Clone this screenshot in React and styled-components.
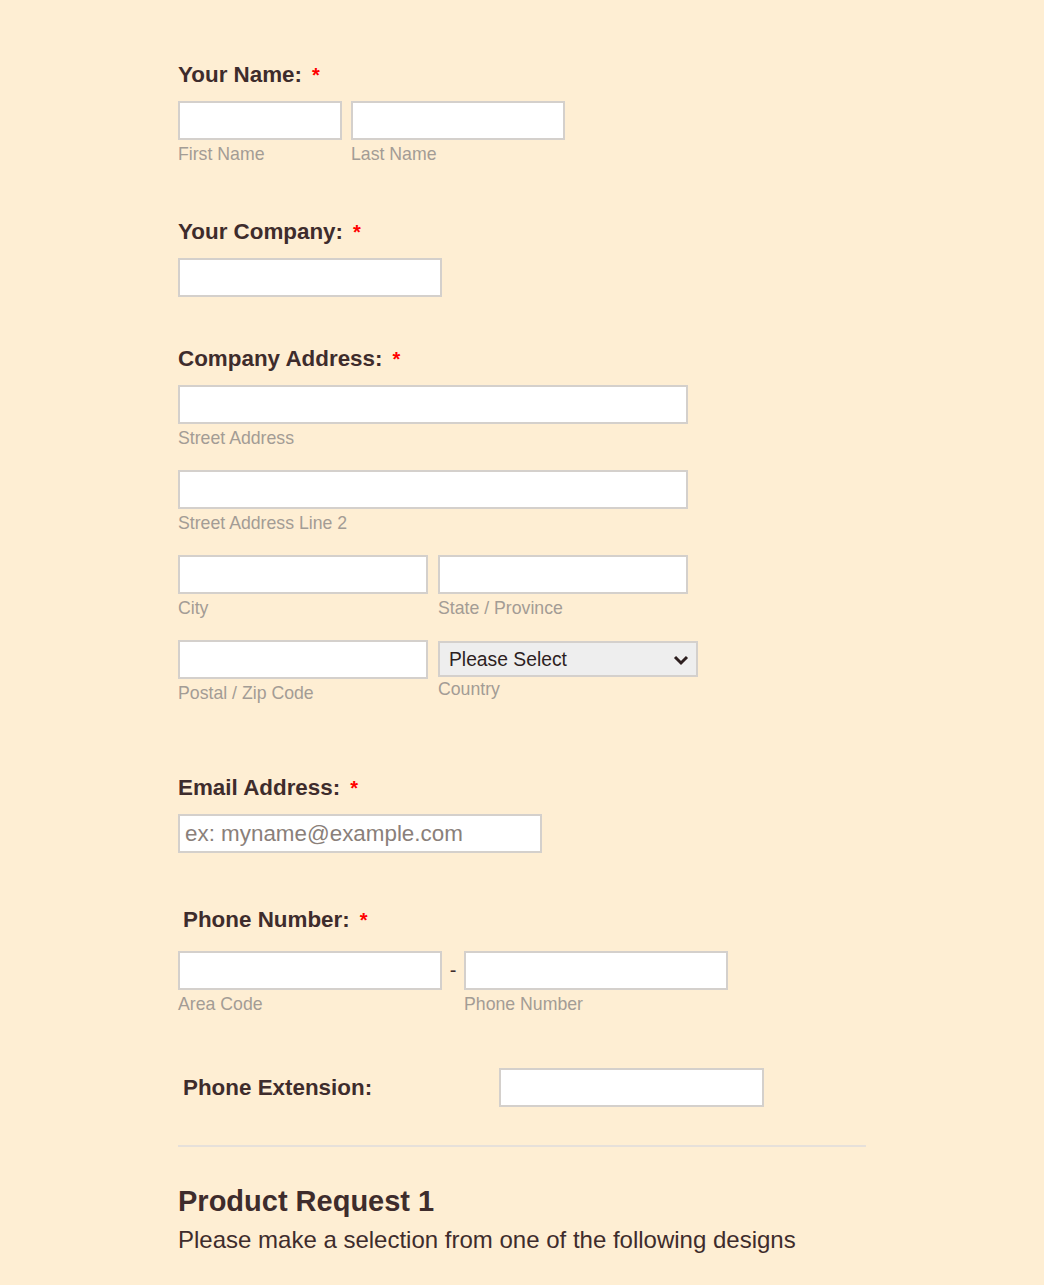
import React from 'react';
import styled, { createGlobalStyle } from 'styled-components';

const GlobalStyle = createGlobalStyle`
  html, body {
    margin: 0;
    padding: 0;
    background: #feeed3;
  }
  body {
    font-family: "Liberation Sans", Arial, sans-serif;
    color: #3e2c2c;
  }
`;

const Form = styled.form`
  width: 688px;
  padding: 62px 0 30px 178px;
  display: flex;
  flex-direction: column;
`;

const Field = styled.div`
  display: flex;
  flex-direction: column;
  margin-bottom: ${(p) => p.$gap || 0}px;
`;

const Label = styled.label`
  font-size: 22.4px;
  font-weight: bold;
  line-height: 26px;
  padding-left: ${(p) => (p.$indent ? 5 : 0)}px;
  margin-bottom: ${(p) => p.$mb ?? 13}px;
`;

const Required = styled.span`
  color: #f00;
  margin-left: 10px;
  font-size: 20px;
`;

const Row = styled.div`
  display: flex;
  align-items: flex-start;
  gap: ${(p) => p.$gap ?? 9}px;
  margin-top: ${(p) => p.$mt || 0}px;
`;

const Part = styled.div`
  display: flex;
  flex-direction: column;
  width: ${(p) => p.$w}px;
  margin-top: ${(p) => p.$mt || 0}px;
`;

const Input = styled.input`
  box-sizing: border-box;
  width: ${(p) => (p.$w ? `${p.$w}px` : '100%')};
  height: 39px;
  background: #fff;
  border: 2px solid #d4d0cc;
  border-radius: 0;
  padding: 2px 5px;
  font-family: inherit;
  font-size: 22.4px;
  color: #3e2c2c;
  outline: none;

  &::placeholder {
    color: #8a7f7a;
  }
`;

const Sub = styled.span`
  font-size: 17.7px;
  line-height: 24px;
  color: #a39c95;
  margin-top: ${(p) => p.$mt ?? 2}px;
`;

const SelectBox = styled.div`
  position: relative;
  width: 260px;
  height: 36px;
  margin-top: 1px;
  box-sizing: border-box;
  border: 2px solid #d4d0cc;
  background: #eeeeee;
  display: flex;
  align-items: center;
`;

const Select = styled.select`
  appearance: none;
  border: none;
  background: transparent;
  width: 100%;
  height: 100%;
  padding: 0 0 0 9px;
  font-family: inherit;
  font-size: 19.3px;
  color: #2d1f1f;
  outline: none;
`;

const Chevron = styled.svg`
  position: absolute;
  right: 7px;
  top: 11px;
  pointer-events: none;
`;

const Dash = styled.span`
  width: 22px;
  text-align: center;
  font-size: 20px;
  line-height: 39px;
`;

const InlineField = styled.div`
  display: flex;
  align-items: center;
  margin-bottom: 38px;
`;

const InlineLabel = styled(Label)`
  width: 321px;
  margin-bottom: 0;
  padding-left: 5px;
  box-sizing: border-box;
`;

const Divider = styled.hr`
  width: 688px;
  border: none;
  height: 2px;
  background: #e6e0da;
  margin: 0 0 36px;
`;

const Heading = styled.h2`
  margin: 0;
  font-size: 29px;
  line-height: 36px;
  font-weight: bold;
`;

const SubHeading = styled.p`
  margin: 6px 0 0;
  font-size: 24px;
  line-height: 30px;
`;

const countries = ['Please Select', 'United States', 'Canada', 'United Kingdom', 'Australia'];

export default function App() {
  return (
    <>
      <GlobalStyle />
      <Form onSubmit={(e) => e.preventDefault()}>
        <Field $gap={53}>
          <Label>
            Your Name:<Required>*</Required>
          </Label>
          <Row>
            <Part $w={164}>
              <Input />
              <Sub>First Name</Sub>
            </Part>
            <Part $w={214}>
              <Input />
              <Sub>Last Name</Sub>
            </Part>
          </Row>
        </Field>

        <Field $gap={49}>
          <Label>
            Your Company:<Required>*</Required>
          </Label>
          <Input $w={264} />
        </Field>

        <Field $gap={70}>
          <Label>
            Company Address:<Required>*</Required>
          </Label>
          <Part $w={510}>
            <Input />
            <Sub>Street Address</Sub>
          </Part>
          <Part $w={510} $mt={20}>
            <Input />
            <Sub>Street Address Line 2</Sub>
          </Part>
          <Row $mt={20} $gap={10}>
            <Part $w={250}>
              <Input />
              <Sub>City</Sub>
            </Part>
            <Part $w={250}>
              <Input />
              <Sub>State / Province</Sub>
            </Part>
          </Row>
          <Row $mt={20} $gap={10}>
            <Part $w={250}>
              <Input />
              <Sub>Postal / Zip Code</Sub>
            </Part>
            <Part $w={260}>
              <SelectBox>
                <Select defaultValue="Please Select">
                  {countries.map((c) => (
                    <option key={c}>{c}</option>
                  ))}
                </Select>
                <Chevron width="16" height="12" viewBox="0 0 16 12">
                  <path d="M2 3 L8 9 L14 3" fill="none" stroke="#2d1f1f" strokeWidth="3" />
                </Chevron>
              </SelectBox>
              <Sub $mt={0}>Country</Sub>
            </Part>
          </Row>
        </Field>

        <Field $gap={54}>
          <Label>
            Email Address:<Required>*</Required>
          </Label>
          <Input $w={364} placeholder="ex: myname@example.com" />
        </Field>

        <Field $gap={52}>
          <Label $indent $mb={18}>
            Phone Number:<Required>*</Required>
          </Label>
          <Row $gap={0}>
            <Part $w={264}>
              <Input />
              <Sub>Area Code</Sub>
            </Part>
            <Dash>-</Dash>
            <Part $w={264}>
              <Input />
              <Sub>Phone Number</Sub>
            </Part>
          </Row>
        </Field>

        <InlineField>
          <InlineLabel>Phone Extension:</InlineLabel>
          <Input $w={265} />
        </InlineField>

        <Divider />

        <Heading>Product Request 1</Heading>
        <SubHeading>Please make a selection from one of the following designs</SubHeading>
      </Form>
    </>
  );
}
